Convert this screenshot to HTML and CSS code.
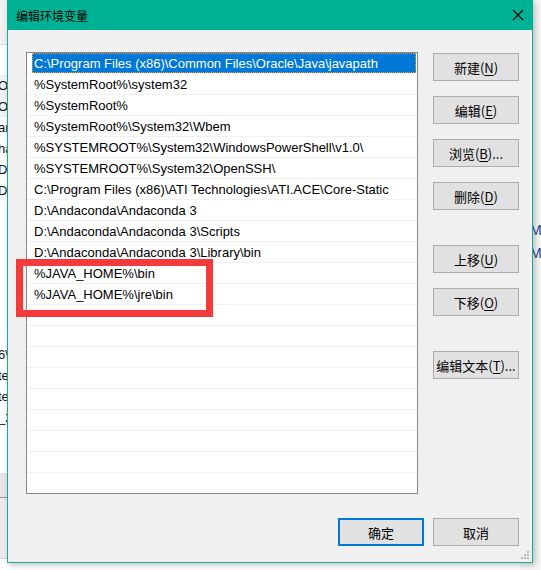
FILE: index.html
```html
<!DOCTYPE html>
<html>
<head>
	<meta charset="utf-8">
	<title>编辑环境变量</title>
	<link rel="stylesheet" href="styles.css">
</head>
<body>
<div class="desk">
	<div class="back-left">
		<div class="back-head"></div>
		<div class="back-list">
			<div class="back-row"></div>
			<div class="back-row hl">Or</div>
			<div class="back-row hl">Or</div>
			<div class="back-row">an</div>
			<div class="back-row">ha</div>
			<div class="back-row">Da</div>
			<div class="back-row">Da</div>
			<div class="back-gap"></div>
			<div class="back-row">6\</div>
			<div class="back-row">te</div>
			<div class="back-row">te</div>
			<div class="back-row">_2</div>
		</div>
		<div class="back-bar"></div>
		<div class="back-foot"></div>
	</div>
	<div class="back-right">
		<div class="back-m">M</div>
		<div class="back-m">M</div>
	</div>
</div>

<div class="dialog">
	<div class="titlebar">
		<span class="title">编辑环境变量</span>
		<svg class="close" width="12" height="12" viewBox="0 0 12 12">
			<path d="M1 1 L11 11 M11 1 L1 11" stroke="#000" stroke-width="1.1" fill="none"/>
		</svg>
	</div>
	<div class="content">
		<div class="main">
			<div class="list">
				<div class="row sel"><span>C:\Program Files (x86)\Common Files\Oracle\Java\javapath</span></div>
				<div class="row"><span>%SystemRoot%\system32</span></div>
				<div class="row"><span>%SystemRoot%</span></div>
				<div class="row"><span>%SystemRoot%\System32\Wbem</span></div>
				<div class="row"><span>%SYSTEMROOT%\System32\WindowsPowerShell\v1.0\</span></div>
				<div class="row"><span>%SYSTEMROOT%\System32\OpenSSH\</span></div>
				<div class="row"><span>C:\Program Files (x86)\ATI Technologies\ATI.ACE\Core-Static</span></div>
				<div class="row"><span>D:\Andaconda\Andaconda 3</span></div>
				<div class="row"><span>D:\Andaconda\Andaconda 3\Scripts</span></div>
				<div class="row"><span>D:\Andaconda\Andaconda 3\Library\bin</span></div>
				<div class="row"><span>%JAVA_HOME%\bin</span></div>
				<div class="row"><span>%JAVA_HOME%\jre\bin</span></div>
				<div class="row"><span></span></div>
				<div class="row"><span></span></div>
				<div class="row"><span></span></div>
				<div class="row"><span></span></div>
				<div class="row"><span></span></div>
				<div class="row"><span></span></div>
				<div class="row"><span></span></div>
				<div class="row"><span></span></div>
				<div class="row"><span></span></div>
			</div>
			<div class="side">
				<button class="btn">新建(<u>N</u>)</button>
				<button class="btn">编辑(<u>E</u>)</button>
				<button class="btn">浏览(<u>B</u>)...</button>
				<button class="btn">删除(<u>D</u>)</button>
				<button class="btn group">上移(<u>U</u>)</button>
				<button class="btn">下移(<u>O</u>)</button>
				<button class="btn group">编辑文本(<u>T</u>)...</button>
			</div>
		</div>
		<div class="footer">
			<button class="btn focus">确定</button>
			<button class="btn">取消</button>
		</div>
		<svg class="grip" width="8" height="8" viewBox="0 0 8 8">
			<rect x="6" y="0" width="2" height="2" fill="#b9b9b9"/>
			<rect x="3" y="3" width="2" height="2" fill="#b9b9b9"/>
			<rect x="6" y="3" width="2" height="2" fill="#b9b9b9"/>
			<rect x="0" y="6" width="2" height="2" fill="#b9b9b9"/>
			<rect x="3" y="6" width="2" height="2" fill="#b9b9b9"/>
			<rect x="6" y="6" width="2" height="2" fill="#b9b9b9"/>
		</svg>
	</div>
</div>

<!-- 标注框 -->
<div class="mark"></div>
</body>
</html>
```

FILE: styles.css
```css
body{
	margin: 0;
	width: 541px;
	height: 570px;
	overflow: hidden;
	background-color: #fff;
	font-family: "Liberation Sans", "Noto Sans CJK SC", sans-serif;
	font-size: 13px;
	position: relative;
}

/* 后面的窗口 */
.desk{
	position: absolute;
	left: 0;
	top: 0;
	width: 541px;
	height: 570px;
}
.back-left{
	position: absolute;
	left: 0;
	top: 0;
	width: 40px;
	height: 570px;
	background-color: #fff;
}
.back-head{
	height: 44px;
	background-color: #f0f0f0;
	border-bottom: 1px solid #d9d9d9;
}
.back-list{
	padding-top: 9px;
}
.back-row{
	height: 21px;
	line-height: 21px;
	margin-left: -2px;
	font-family: "Liberation Sans", sans-serif;
	font-size: 13px;
	color: #111;
}
.back-row.hl{
	background-color: #f2f2f2;
}
.back-gap{
	height: 143px;
}
.back-bar{
	position: absolute;
	left: 0;
	top: 473px;
	width: 40px;
	height: 24px;
	background-color: #e6e6e6;
	border-bottom: 1px solid #9a9a9a;
}
.back-foot{
	position: absolute;
	left: 0;
	top: 498px;
	width: 40px;
	height: 60px;
	background-color: #ececec;
	border-bottom: 1px solid #d4d4d4;
}
.back-right{
	position: absolute;
	left: 520px;
	top: 0;
	width: 21px;
	height: 570px;
	background-color: #f6f6f6;
	padding-top: 220px;
	box-sizing: border-box;
}
.back-m{
	height: 23px;
	line-height: 20px;
	padding-left: 10px;
	font-size: 14px;
	color: #1f3f8f;
}

/* 对话框 */
.dialog{
	position: absolute;
	left: 7px;
	top: 0;
	width: 526px;
	border: 1px solid #16ad97;
	border-top: 0;
	box-sizing: border-box;
	background-color: #f0f0f0;
	box-shadow: 2px 2px 6px rgba(0,0,0,0.25);
}
.titlebar{
	height: 30px;
	margin: 0 -1px;
	background-color: #00b294;
	display: flex;
	align-items: center;
	justify-content: space-between;
	padding: 0 9px 0 9px;
}
.title{
	font-family: "Noto Sans CJK SC", sans-serif;
	font-size: 12px;
	color: #000;
}
.content{
	position: relative;
	height: 532px;
	box-sizing: border-box;
	padding: 22px 13px 0 18px;
}
.main{
	display: flex;
}
.list{
	width: 392px;
	height: 442px;
	box-sizing: border-box;
	border: 1px solid #828790;
	background-color: #fff;
	overflow: hidden;
}
.row{
	height: 20px;
	border-bottom: 1px solid #f0f0f0;
	padding: 0 1px 0 5px;
}
.row span{
	display: block;
	height: 20px;
	line-height: 21px;
	padding-left: 2px;
	color: #000;
	white-space: nowrap;
}
.row.sel span{
	background-color: #0078d7;
	color: #fff;
	outline: 1px dotted #f0a030;
	outline-offset: -1px;
}
.side{
	margin-left: 15px;
	padding-top: 1px;
	display: flex;
	flex-direction: column;
	gap: 15px;
}
.side .group{
	margin-top: 20px;
}
.btn{
	width: 86px;
	height: 28px;
	box-sizing: border-box;
	border: 1px solid #adadad;
	background-color: #e1e1e1;
	font-family: "Noto Sans CJK SC", sans-serif;
	font-size: 13px;
	color: #000;
	padding: 0;
	margin: 0;
}
.btn u{
	text-decoration-thickness: 1px;
	text-underline-offset: 2px;
}
.btn.focus{
	border: 2px solid #0078d7;
}
.footer{
	margin-top: 24px;
	display: flex;
	justify-content: flex-end;
	gap: 9px;
}
.grip{
	position: absolute;
	right: 3px;
	bottom: 3px;
}

.mark{
	position: absolute;
	left: 16px;
	top: 259px;
	width: 197px;
	height: 58px;
	box-sizing: border-box;
	border: 7px solid #f43a3a;
}
```
